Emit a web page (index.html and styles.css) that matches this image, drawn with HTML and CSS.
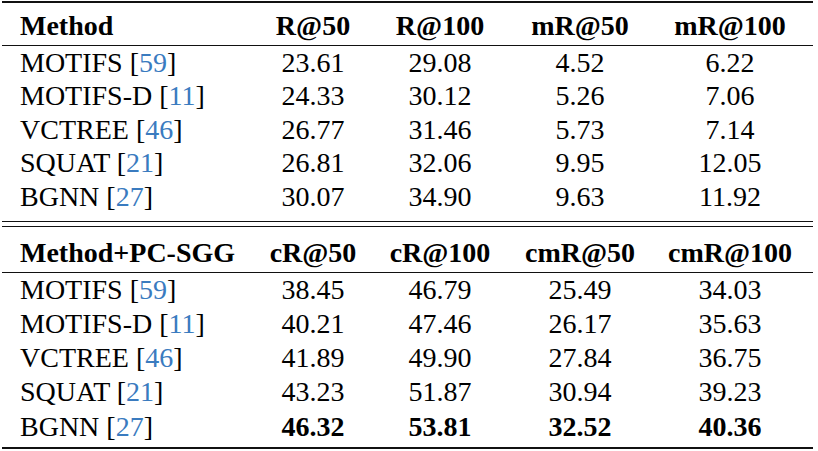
FILE: index.html
```html
<!DOCTYPE html>
<html lang="en">
<head>
    <meta charset="UTF-8">
    <title>PC-SGG results</title>
    <link rel="stylesheet" href="styles.css">
</head>
<body>
    <div class="results">
        <div class="block block-top">
            <div class="row head first">
                <div class="cell name">Method</div>
                <div class="cell">R@50</div>
                <div class="cell">R@100</div>
                <div class="cell">mR@50</div>
                <div class="cell">mR@100</div>
            </div>
            <div class="body">
                <div class="row">
                    <div class="cell name">MOTIFS [<span class="cite">59</span>]</div>
                    <div class="cell">23.61</div><div class="cell">29.08</div><div class="cell">4.52</div><div class="cell">6.22</div>
                </div>
                <div class="row">
                    <div class="cell name">MOTIFS-D [<span class="cite">11</span>]</div>
                    <div class="cell">24.33</div><div class="cell">30.12</div><div class="cell">5.26</div><div class="cell">7.06</div>
                </div>
                <div class="row">
                    <div class="cell name">VCTREE [<span class="cite">46</span>]</div>
                    <div class="cell">26.77</div><div class="cell">31.46</div><div class="cell">5.73</div><div class="cell">7.14</div>
                </div>
                <div class="row">
                    <div class="cell name">SQUAT [<span class="cite">21</span>]</div>
                    <div class="cell">26.81</div><div class="cell">32.06</div><div class="cell">9.95</div><div class="cell">12.05</div>
                </div>
                <div class="row">
                    <div class="cell name">BGNN [<span class="cite">27</span>]</div>
                    <div class="cell">30.07</div><div class="cell">34.90</div><div class="cell">9.63</div><div class="cell">11.92</div>
                </div>
            </div>
        </div>
        <div class="block block-bottom">
            <div class="row head">
                <div class="cell name">Method+PC-SGG</div>
                <div class="cell">cR@50</div>
                <div class="cell">cR@100</div>
                <div class="cell">cmR@50</div>
                <div class="cell">cmR@100</div>
            </div>
            <div class="body">
                <div class="row">
                    <div class="cell name">MOTIFS [<span class="cite">59</span>]</div>
                    <div class="cell">38.45</div><div class="cell">46.79</div><div class="cell">25.49</div><div class="cell">34.03</div>
                </div>
                <div class="row">
                    <div class="cell name">MOTIFS-D [<span class="cite">11</span>]</div>
                    <div class="cell">40.21</div><div class="cell">47.46</div><div class="cell">26.17</div><div class="cell">35.63</div>
                </div>
                <div class="row">
                    <div class="cell name">VCTREE [<span class="cite">46</span>]</div>
                    <div class="cell">41.89</div><div class="cell">49.90</div><div class="cell">27.84</div><div class="cell">36.75</div>
                </div>
                <div class="row">
                    <div class="cell name">SQUAT [<span class="cite">21</span>]</div>
                    <div class="cell">43.23</div><div class="cell">51.87</div><div class="cell">30.94</div><div class="cell">39.23</div>
                </div>
                <div class="row best">
                    <div class="cell name">BGNN [<span class="cite">27</span>]</div>
                    <div class="cell">46.32</div><div class="cell">53.81</div><div class="cell">32.52</div><div class="cell">40.36</div>
                </div>
            </div>
        </div>
    </div>
</body>
</html>
```

FILE: styles.css
```css
body {
    margin: 0;
    padding: 1px 0 0 2px;
    background-color: white;
    font-family: "Liberation Serif", "Times New Roman", serif;
    font-size: 28px;
    color: #000;
}
.results {
    width: 811px;
    border-top: 2px solid #111;
    border-bottom: 2px solid #111;
}
.block-top {
    border-bottom: 1px solid #111;
    padding-bottom: 8px;
}
.block-bottom {
    margin-top: 4px;
    border-top: 1px solid #111;
    padding-bottom: 3px;
}
.row {
    display: grid;
    grid-template-columns: 248px 126px 128px 152px 148px;
    line-height: 33.5px;
}
.row.head {
    font-weight: bold;
    padding: 9px 0 1.5px;
    border-bottom: 1px solid #111;
}
.row.head.first {
    padding-top: 6px;
    padding-bottom: 2px;
}
.block-bottom .row {
    line-height: 34.2px;
}
.cell {
    text-align: center;
    white-space: nowrap;
}
.cell.name {
    text-align: left;
    padding-left: 18px;
}
.cite {
    color: #3a7bbf;
}
.row.best .cell:not(.name) {
    font-weight: bold;
}
```
